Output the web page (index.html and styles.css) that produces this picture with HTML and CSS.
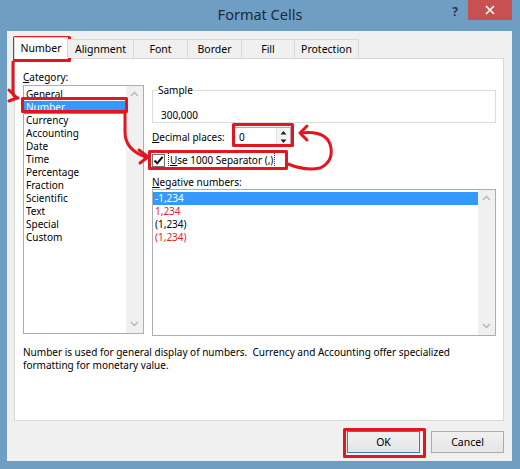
FILE: index.html
```html
<!DOCTYPE html>
<html>
<head>
<meta charset="utf-8">
<link rel="stylesheet" href="styles.css">
</head>
<body>
<div class="window">
  <div class="titlebar">
    <div></div>
    <div class="title">Format Cells</div>
    <div class="controls">
      <span class="help">?</span>
      <span class="close"><svg width="10" height="10" viewBox="0 0 10 10"><path d="M1 1L9 9M9 1L1 9" stroke="#fff" stroke-width="1.6"/></svg></span>
    </div>
  </div>
  <div class="client">
    <div class="tabs">
      <div class="tab active w54">Number</div>
      <div class="tab w65">Alignment</div>
      <div class="tab w54">Font</div>
      <div class="tab w54">Border</div>
      <div class="tab w53">Fill</div>
      <div class="tab w65">Protection</div>
    </div>
    <div class="panel">
      <div class="top">
        <div class="leftcol">
          <div class="label"><u>C</u>ategory:</div>
          <div class="listbox cat">
            <div class="items">
              <div class="item">General</div>
              <div class="item sel">Number</div>
              <div class="item">Currency</div>
              <div class="item">Accounting</div>
              <div class="item">Date</div>
              <div class="item">Time</div>
              <div class="item">Percentage</div>
              <div class="item">Fraction</div>
              <div class="item">Scientific</div>
              <div class="item">Text</div>
              <div class="item">Special</div>
              <div class="item">Custom</div>
            </div>
            <div class="scroll">
              <svg width="9" height="6" viewBox="0 0 9 6"><path d="M1 5L4.5 1.5L8 5" fill="none" stroke="#b4b4b4" stroke-width="1.3"/></svg>
              <svg width="9" height="6" viewBox="0 0 9 6"><path d="M1 1L4.5 4.5L8 1" fill="none" stroke="#b4b4b4" stroke-width="1.3"/></svg>
            </div>
          </div>
        </div>
        <div class="rightcol">
          <div class="sample">
            <span class="sample-label">Sample</span>
            <div class="sample-value">300,000</div>
          </div>
          <div class="decrow">
            <span class="declabel"><u>D</u>ecimal places:</span>
            <div class="spinner">
              <span class="spinval">0</span>
              <div class="spinbtns">
                <svg width="13" height="9" viewBox="0 0 13 9"><path d="M3.5 6.5L6.5 3L9.5 6.5Z" fill="#222"/></svg>
                <svg width="13" height="9" viewBox="0 0 13 9"><path d="M3.5 2.5L6.5 6L9.5 2.5Z" fill="#222"/></svg>
              </div>
            </div>
          </div>
          <div class="checkrow">
            <span class="checkbox"><svg width="11" height="11" viewBox="0 0 11 11"><path d="M1.5 5.5L4.2 8.3L9.6 1.8" fill="none" stroke="#111" stroke-width="2"/></svg></span>
            <span class="checklabel"><u>U</u>se 1000 Separator (,)</span>
          </div>
          <div class="label neglabel"><u>N</u>egative numbers:</div>
          <div class="listbox neg">
            <div class="items">
              <div class="item sel">-1,234</div>
              <div class="item red">1,234</div>
              <div class="item">(1,234)</div>
              <div class="item red">(1,234)</div>
            </div>
            <div class="scroll">
              <svg width="9" height="6" viewBox="0 0 9 6"><path d="M1 5L4.5 1.5L8 5" fill="none" stroke="#b4b4b4" stroke-width="1.3"/></svg>
              <svg width="9" height="6" viewBox="0 0 9 6"><path d="M1 1L4.5 4.5L8 1" fill="none" stroke="#b4b4b4" stroke-width="1.3"/></svg>
            </div>
          </div>
        </div>
      </div>
      <div class="desc">Number is used for general display of numbers.&nbsp; Currency and Accounting offer specialized formatting for monetary value.</div>
    </div>
    <div class="buttons">
      <div class="btn default">OK</div>
      <div class="btn">Cancel</div>
    </div>
  </div>
  <svg class="annot" width="520" height="469" viewBox="0 0 520 469">
    <g fill="none" stroke="#e3151f" stroke-width="3" stroke-linejoin="round" stroke-linecap="round">
      <rect x="14.5" y="37.5" width="55" height="23"/>
      <rect x="22.5" y="98.5" width="104" height="13"/>
      <rect x="233.5" y="124.5" width="59" height="21"/>
      <rect x="149.5" y="151.5" width="137" height="17"/>
      <rect x="344.5" y="429.5" width="80" height="27"/>
      <path d="M13 62V93Q13 97 18 98"/>
      <path d="M9 90L17 98L9 101"/>
      <path d="M125 113V132Q125 150 146 157"/>
      <path d="M139 150L148 157L140 163"/>
      <path d="M288 164Q305 171 320 168Q333 162 331 148Q328 130 301 133"/>
      <path d="M307 126L300 133L307 140"/>
    </g>
  </svg>
</div>
</body>
</html>
```
FILE: styles.css
```css
* { box-sizing: border-box; }
body {
  margin: 0;
  font-family: "Noto Sans", "Open Sans", sans-serif;
  font-size: 10px;
  color: #000;
}
.window {
  position: relative;
  width: 520px;
  height: 469px;
  background: #6e9ec4;
  display: flex;
  flex-direction: column;
}
.titlebar {
  height: 31px;
  display: grid;
  grid-template-columns: 1fr auto 1fr;
}
.title {
  font-size: 14.5px;
  color: #1e2a36;
  padding-top: 4px;
}
.controls {
  display: flex;
  justify-content: flex-end;
  align-items: flex-start;
  padding-right: 8px;
}
.help {
  font-size: 12px;
  font-weight: bold;
  color: #2b3a48;
  margin: 3px 10px 0 0;
}
.close {
  width: 44px;
  height: 20px;
  background: #c75050;
  display: flex;
  align-items: center;
  justify-content: center;
}
.client {
  flex: 1;
  margin: 0 8px 8px 7px;
  background: #f0f0f0;
  padding: 5px 8px 7px 7px;
  display: flex;
  flex-direction: column;
}
.tabs {
  display: flex;
  align-items: flex-end;
  height: 22px;
  position: relative;
  z-index: 1;
}
.tab {
  height: 19px;
  border: 1px solid #d9d9d9;
  border-bottom: none;
  border-right: none;
  background: #f0f0f0;
  text-align: center;
  line-height: 19px;
  font-size: 10.5px;
}
.tab:last-child { border-right: 1px solid #d9d9d9; }
.tab.active {
  height: 22px;
  background: #fff;
  margin-bottom: -1px;
  border-right: 1px solid #d9d9d9;
  line-height: 21px;
}
.tab.active + .tab { border-left: none; }
.w54 { width: 54px; }
.w65 { width: 65px; }
.w53 { width: 53px; }
.panel {
  height: 363px;
  background: #fff;
  border: 1px solid #d9d9d9;
  padding: 11px 7px 0 8px;
}
.top {
  display: flex;
  gap: 8px;
}
.leftcol { width: 121px; }
.label { height: 14px; line-height: 14px; }
.listbox {
  border: 1px solid #abadb3;
  display: flex;
  background: #fff;
}
.cat { height: 249px; margin-top: 1px; }
.items { flex: 1; padding-top: 2px; }
.item { height: 13px; line-height: 13px; padding-left: 2px; }
.item.sel { background: #3399ff; color: #fff; }
.item.red { color: #e4232a; }
.scroll {
  width: 17px;
  background: #f0f0f0;
  display: flex;
  flex-direction: column;
  justify-content: space-between;
  align-items: center;
  padding: 5px 0 6px;
}
.rightcol {
  width: 344px;
  padding-top: 20px;
}
.sample {
  height: 33px;
  border: 1px solid #dcdcdc;
  padding-left: 4px;
}
.sample-label {
  display: inline-block;
  background: #fff;
  padding: 0 1px;
  height: 14px;
  line-height: 14px;
  margin-top: -8px;
  vertical-align: top;
}
.sample-value { padding-left: 4px; line-height: 14px; margin-top: 3px; }
.decrow {
  display: flex;
  align-items: center;
  height: 25px;
  margin-top: 1px;
}
.declabel { width: 81px; }
.spinner {
  width: 58px;
  height: 20px;
  border: 1px solid #abadb3;
  display: flex;
  align-items: center;
}
.spinval { flex: 1; padding-left: 5px; }
.spinbtns {
  width: 14px;
  height: 18px;
  display: flex;
  flex-direction: column;
  background: #f4f4f4;
  border-left: 1px solid #e2e2e2;
}
.checkrow {
  display: flex;
  align-items: center;
  height: 22px;
}
.checkbox {
  width: 13px;
  height: 13px;
  border: 1px solid #707070;
  display: flex;
  align-items: center;
  justify-content: center;
  margin-right: 3px;
  background: #fff;
}
.checklabel {
  border: 1px dotted #333;
  padding: 0 1px;
  line-height: 14px;
}
.neglabel { margin-top: 4px; }
.neg { height: 147px; }
.desc {
  margin-top: 10px;
  line-height: 13px;
  width: 470px;
}
.buttons {
  display: flex;
  justify-content: flex-end;
  gap: 11px;
  margin-top: 10px;
}
.btn {
  width: 73px;
  height: 22px;
  border: 1px solid #acacac;
  background: linear-gradient(#f0f0f0, #e5e5e5);
  text-align: center;
  line-height: 20px;
  font-size: 10.5px;
}
.btn.default { border-color: #3c7fb1; }
.annot {
  position: absolute;
  left: 0;
  top: 0;
  pointer-events: none;
}
```
